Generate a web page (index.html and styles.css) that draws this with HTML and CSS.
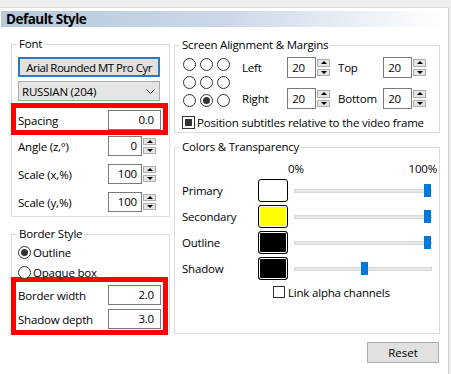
FILE: index.html
```html
<!DOCTYPE html>
<html lang="en">
<head>
    <meta charset="UTF-8">
    <title>Default Style</title>
    <link rel="stylesheet" href="styles.css">
</head>
<body>
    <div class="panel">
        <div class="title-bar">Default Style</div>

        <div class="main">
            <!-- left column: font + border style -->
            <div class="col-left">
                <fieldset class="group font-group">
                    <legend>Font</legend>
                    <button class="font-btn">Arial Rounded MT Pro Cyr</button>
                    <div class="select">
                        <span>RUSSIAN (204)</span>
                        <svg width="9" height="5" viewBox="0 0 9 5"><polyline points="0.5,0.5 4.5,4.5 8.5,0.5" fill="none" stroke="#333" stroke-width="1"/></svg>
                    </div>

                    <div class="highlight">
                        <div class="field-row">
                            <span>Spacing</span>
                            <div class="num">0.0</div>
                        </div>
                    </div>

                    <div class="field-row first">
                        <span>Angle (z,°)</span>
                        <div class="spin">
                            <div class="spin-val">0</div>
                            <div class="spin-btns"><span class="up"></span><span class="down"></span></div>
                        </div>
                    </div>
                    <div class="field-row">
                        <span>Scale (x,%)</span>
                        <div class="spin">
                            <div class="spin-val">100</div>
                            <div class="spin-btns"><span class="up"></span><span class="down"></span></div>
                        </div>
                    </div>
                    <div class="field-row">
                        <span>Scale (y,%)</span>
                        <div class="spin">
                            <div class="spin-val">100</div>
                            <div class="spin-btns"><span class="up"></span><span class="down"></span></div>
                        </div>
                    </div>
                </fieldset>

                <fieldset class="group border-group">
                    <legend>Border Style</legend>
                    <div class="radio-row"><span class="radio checked"></span>Outline</div>
                    <div class="radio-row"><span class="radio"></span>Opaque box</div>

                    <div class="highlight tall">
                        <div class="field-row">
                            <span>Border width</span>
                            <div class="num">2.0</div>
                        </div>
                        <div class="field-row">
                            <span>Shadow depth</span>
                            <div class="num">3.0</div>
                        </div>
                    </div>
                </fieldset>
            </div>

            <!-- right column: alignment, colours, reset -->
            <div class="col-right">
                <fieldset class="group align-group">
                    <legend>Screen Alignment &amp; Margins</legend>
                    <div class="align-top">
                        <div class="radio-grid">
                            <span class="radio"></span><span class="radio"></span><span class="radio"></span>
                            <span class="radio"></span><span class="radio"></span><span class="radio"></span>
                            <span class="radio"></span><span class="radio checked"></span><span class="radio"></span>
                        </div>
                        <div class="margins">
                            <span>Left</span>
                            <div class="spin big"><div class="spin-val">20</div><div class="spin-btns"><span class="up"></span><span class="down"></span></div></div>
                            <span>Top</span>
                            <div class="spin big"><div class="spin-val">20</div><div class="spin-btns"><span class="up"></span><span class="down"></span></div></div>
                            <span>Right</span>
                            <div class="spin big"><div class="spin-val">20</div><div class="spin-btns"><span class="up"></span><span class="down"></span></div></div>
                            <span>Bottom</span>
                            <div class="spin big"><div class="spin-val">20</div><div class="spin-btns"><span class="up"></span><span class="down"></span></div></div>
                        </div>
                    </div>
                    <div class="check-row">
                        <span class="checkbox mixed"></span>Position subtitles relative to the video frame
                    </div>
                </fieldset>

                <fieldset class="group colors-group">
                    <legend>Colors &amp; Transparency</legend>
                    <div class="pct-row"><span>0%</span><span>100%</span></div>

                    <div class="color-row">
                        <span>Primary</span>
                        <span class="swatch swatch-white"></span>
                        <div class="slider"><span class="thumb" style="--v: 100"></span></div>
                    </div>
                    <div class="color-row">
                        <span>Secondary</span>
                        <span class="swatch swatch-yellow"></span>
                        <div class="slider"><span class="thumb" style="--v: 100"></span></div>
                    </div>
                    <div class="color-row">
                        <span>Outline</span>
                        <span class="swatch swatch-black"></span>
                        <div class="slider"><span class="thumb" style="--v: 100"></span></div>
                    </div>
                    <div class="color-row">
                        <span>Shadow</span>
                        <span class="swatch swatch-black"></span>
                        <div class="slider"><span class="thumb" style="--v: 51"></span></div>
                    </div>

                    <div class="check-row link-row">
                        <span class="checkbox"></span>Link alpha channels
                    </div>
                </fieldset>

                <button class="reset-btn">Reset</button>
            </div>
        </div>
    </div>
</body>
</html>
```

FILE: styles.css
```css
* {
    box-sizing: border-box;
}

body {
    margin: 0;
    background-color: #efefef;
    font-family: 'Open Sans', 'Noto Sans', sans-serif;
    font-size: 11.5px;
    letter-spacing: -0.2px;
    color: #000;
    white-space: nowrap;
}

.panel {
    margin-top: 7px;
    width: 449px;
    height: 367px;
    background-color: #fff;
    border-top: 1px solid #dcdcdc;
    border-right: 1px solid #cdcdcd;
    overflow: hidden;
}

.title-bar {
    margin: 3px 0 0 1px;
    height: 16px;
    padding-left: 5px;
    line-height: 16px;
    font-size: 13.5px;
    letter-spacing: -0.5px;
    font-weight: bold;
    background: linear-gradient(to right, #b6c8dd, #cad8e7 50%, #ffffff 99%);
}

.main {
    display: grid;
    grid-template-columns: 159px 266px;
    column-gap: 4px;
    padding: 9px 0 0 11px;
}

/* group boxes */
.group {
    margin: 0;
    min-width: 0;
    border: 1px solid #dcdcdc;
    padding: 5px 6px 4px;
}

.group legend {
    padding: 0 2px;
    margin-left: -1px;
    line-height: 16px;
}

.font-btn {
    display: block;
    width: 142px;
    height: 20px;
    padding: 0;
    border: 2px solid #2a7bc6;
    background-color: #e1e1e1;
    font-family: inherit;
    font-size: 11.5px;
    letter-spacing: -0.5px;
    color: #000;
    white-space: nowrap;
}

.select {
    display: flex;
    align-items: center;
    justify-content: space-between;
    width: 142px;
    height: 20px;
    margin-top: 4px;
    padding: 0 4px 0 3px;
    border: 1px solid #acacac;
    background-color: #e5e5e5;
}

/* label + value rows */
.field-row {
    display: grid;
    grid-template-columns: 90px auto;
    align-items: center;
    height: 20px;
    margin-top: 8px;
}

.field-row.first {
    margin-top: 1px;
}

.num {
    width: 53px;
    height: 20px;
    line-height: 18px;
    padding-right: 6px;
    text-align: right;
    border: 1px solid #7a7a7a;
    background-color: #fff;
}

.spin {
    display: flex;
    height: 20px;
}

.spin-val {
    width: 34px;
    line-height: 18px;
    padding-right: 4px;
    text-align: right;
    border: 1px solid #7a7a7a;
    background-color: #fff;
}

.spin-btns {
    width: 15px;
    display: flex;
    flex-direction: column;
    gap: 2px;
    padding: 2px 1px;
}

.spin-btns span {
    flex: 1;
    display: flex;
    align-items: center;
    justify-content: center;
    border: 1px solid #adadad;
    background-color: #e5e5e5;
}

.spin-btns .up::after,
.spin-btns .down::after {
    content: '';
    border-left: 3px solid transparent;
    border-right: 3px solid transparent;
}

.spin-btns .up::after {
    border-bottom: 3px solid #000;
}

.spin-btns .down::after {
    border-top: 3px solid #000;
}

.spin.big {
    height: 21px;
}

.spin.big .spin-val {
    width: 29px;
    line-height: 19px;
    padding-right: 10px;
}

/* red highlight boxes */
.highlight {
    margin: 2px -5px 0 -7px;
    padding: 2px 1px 0 2px;
    border: 5px solid #ff0000;
}

.highlight .field-row {
    margin-top: 0;
}

.highlight.tall {
    margin-top: -5px;
    margin-bottom: -1px;
    padding: 3px 1px 1px 2px;
}

.highlight.tall .field-row + .field-row {
    margin-top: 4px;
}

.border-group {
    margin-top: 9px;
    padding-top: 0;
    padding-bottom: 0;
}

/* radios and checkboxes */
.radio {
    display: inline-flex;
    align-items: center;
    justify-content: center;
    width: 13px;
    height: 13px;
    border: 1px solid #333;
    border-radius: 50%;
    background-color: #fff;
}

.radio.checked::after {
    content: '';
    width: 7px;
    height: 7px;
    border-radius: 50%;
    background-color: #333;
}

.radio-row {
    display: flex;
    align-items: center;
    gap: 2px;
    height: 20px;
}

.checkbox {
    width: 13px;
    height: 13px;
    padding: 2px;
    border: 1px solid #333;
    background-color: #fff;
}

.checkbox.mixed::after {
    content: '';
    display: block;
    width: 100%;
    height: 100%;
    background-color: #333;
}

.check-row {
    display: flex;
    align-items: center;
    gap: 2px;
    height: 16px;
    margin-top: 5px;
}

/* right column */
.col-right {
    display: flex;
    flex-direction: column;
    margin-top: 1px;
}

.align-group,
.colors-group {
    padding: 4px 2px 2px 7px;
}

.align-group legend,
.colors-group legend {
    margin-left: -2px;
}

.align-top {
    display: flex;
    align-items: flex-start;
    gap: 12px;
}

.radio-grid {
    display: grid;
    grid-template-columns: repeat(3, 13px);
    gap: 5px 4px;
    margin: 1px 0 0 1px;
}

.margins {
    display: grid;
    grid-template-columns: 38px 44px 38px 44px;
    column-gap: 7px;
    row-gap: 10px;
    align-items: center;
}

.colors-group {
    margin-top: 6px;
    padding-top: 6px;
    padding-bottom: 33px;
}

.pct-row {
    display: flex;
    justify-content: space-between;
    height: 16px;
    line-height: 16px;
    padding-left: 106px;
}

.color-row {
    display: grid;
    grid-template-columns: 70px 30px 138px;
    column-gap: 6px;
    align-items: center;
    height: 23px;
    margin-top: 3px;
}

.pct-row + .color-row {
    margin-top: 2px;
}

.swatch {
    height: 23px;
    border: 1px solid #000;
    border-radius: 3px;
    box-shadow: inset 0 0 0 1px #fff;
}

.swatch-white {
    background-color: #fff;
}

.swatch-yellow {
    background-color: #ffff00;
}

.swatch-black {
    background-color: #000;
}

.slider {
    position: relative;
    height: 4px;
    background-color: #e7e7e7;
    border: 1px solid #d6d6d6;
}

.slider .thumb {
    position: absolute;
    top: -6px;
    left: calc((100% - 7px) * var(--v) / 100);
    width: 7px;
    height: 13px;
    background-color: #0078d7;
}

.link-row {
    margin-top: 4px;
    padding-left: 91px;
    gap: 3px;
}

.link-row .checkbox {
    width: 12px;
    height: 12px;
}

.reset-btn {
    align-self: flex-end;
    width: 72px;
    height: 21px;
    margin: 8px 1px 0 0;
    padding: 0;
    border: 1px solid #adadad;
    background-color: #e1e1e1;
    font-family: inherit;
    font-size: 11.5px;
    color: #000;
}
```
